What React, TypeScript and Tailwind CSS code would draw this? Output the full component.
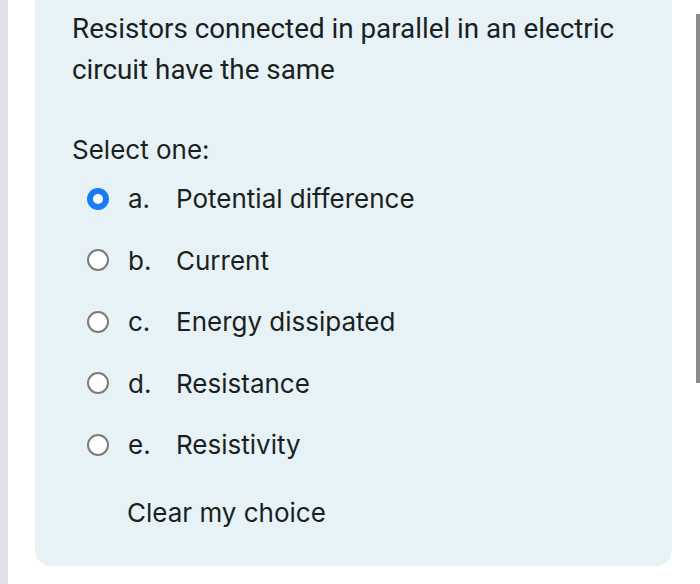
const options = [
  { letter: 'a.', label: 'Potential difference', checked: true },
  { letter: 'b.', label: 'Current', checked: false },
  { letter: 'c.', label: 'Energy dissipated', checked: false },
  { letter: 'd.', label: 'Resistance', checked: false },
  { letter: 'e.', label: 'Resistivity', checked: false },
];

function Radio({ checked }: { checked: boolean }) {
  if (checked) {
    return <span className="block h-[22px] w-[22px] rounded-full border-[6px] border-[#1a7cf2] bg-white" />;
  }
  return <span className="block h-[22px] w-[22px] rounded-full border-[2px] border-[#7c7c7c] bg-white" />;
}

export default function App() {
  return (
    <div className="flex h-[584px] w-[700px] overflow-hidden bg-white">
      <div className="w-[8px] shrink-0 bg-[#e1e1e7]" />
      <div className="w-[27px] shrink-0" />
      <div className="flex h-[566px] w-[637px] shrink-0 flex-col rounded-b-[16px] bg-[#e6f2f5] pl-[37px] pr-4 text-[#1b1f22] [font-family:Inter,sans-serif]">
        <p className="mt-[8px] text-[27.8px] leading-[41px] [font-family:Roboto,sans-serif]">
          Resistors connected in parallel in an electric circuit have the same
        </p>
        <p className="mt-[42px] text-[26px] leading-[36px]">Select one:</p>
        <div className="flex flex-col">
          {options.map((o) => (
            <div key={o.letter} className="flex h-[61.5px] items-center">
              <div className="ml-[15px] w-[41px]">
                <Radio checked={o.checked} />
              </div>
              <span className="w-[48px] text-[26px]">{o.letter}</span>
              <span className="text-[26px]">{o.label}</span>
            </div>
          ))}
        </div>
        <p className="ml-[55px] mt-[17px] text-[26px]">Clear my choice</p>
      </div>
      <div className="w-[24px] shrink-0" />
      <div className="mt-[14px] h-[369px] w-[4px] shrink-0 bg-[#8c8c8c]" />
    </div>
  );
}
